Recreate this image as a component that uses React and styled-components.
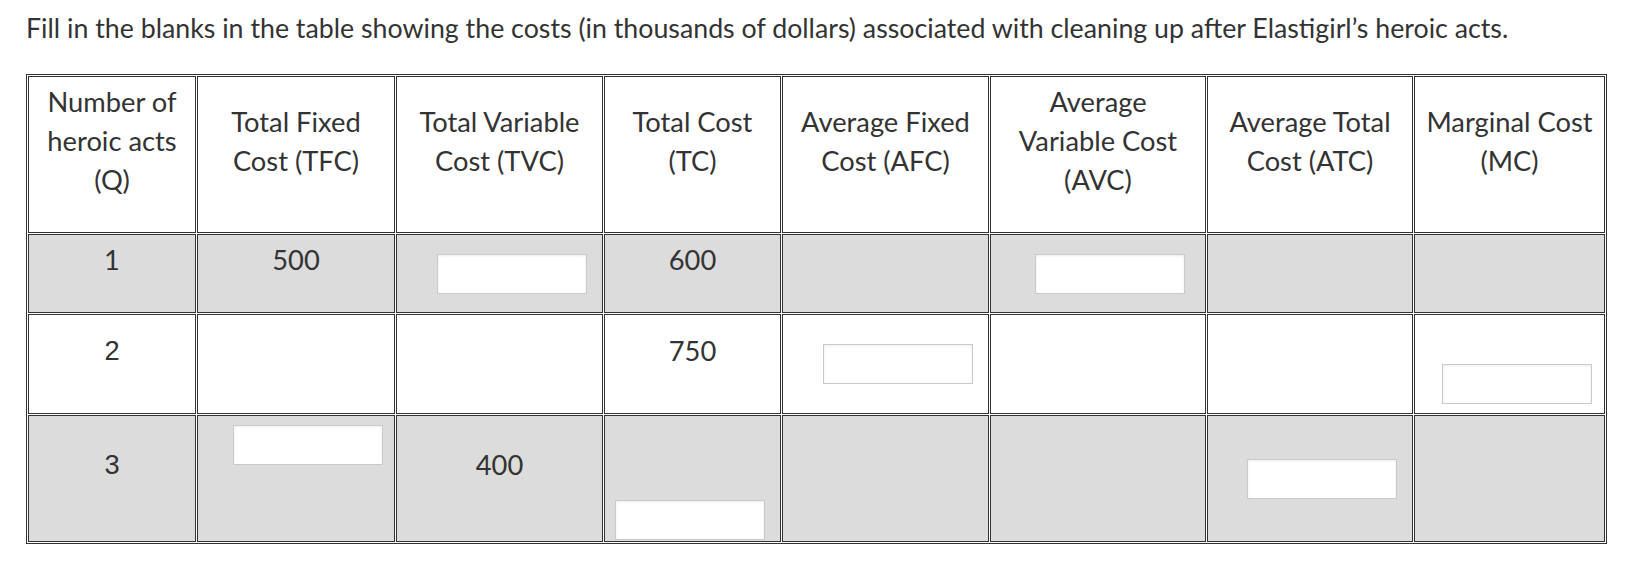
import React from "react";
import styled, { createGlobalStyle } from "styled-components";

const GlobalStyle = createGlobalStyle`
  html, body {
    margin: 0;
    padding: 0;
    background: #fff;
  }
  body {
    font-family: Lato, "Noto Sans", sans-serif;
    color: #333;
  }
`;

const Page = styled.div`
  padding-left: 26px;
`;

const Prompt = styled.p`
  margin: 0;
  padding-top: 7px;
  font-size: 26.75px;
  line-height: 42px;
  color: #333;
`;

const CostTable = styled.table`
  margin-top: 25px;
  width: 1581px;
  table-layout: fixed;
  border: 1px solid #333;
  border-spacing: 1px;
  font-size: 27.3px;
  color: #333;
`;

const Col = styled.col`
  width: ${(p) => p.$w}px;
`;

const Row = styled.tr`
  height: ${(p) => p.$h}px;
`;

const Cell = styled.td`
  border: 1px solid #333;
  padding: 5px ${(p) => 5 + (p.$shift < 0 ? -2 * p.$shift : 0)}px 5px
    ${(p) => 5 + (p.$shift > 0 ? 2 * p.$shift : 0)}px;
  padding-top: ${(p) => (p.$align === "top" ? 5 + (p.$gap || 0) : 5)}px;
  padding-bottom: ${(p) => (p.$align === "bottom" ? 5 + (p.$gap || 0) : 5)}px;
  text-align: center;
  vertical-align: ${(p) => p.$align || "middle"};
  background: ${(p) => (p.$shade ? "#dcdcdc" : "#fff")};
  font-weight: normal;
`;

const Label = styled.p`
  margin: 0 0 28px;
  line-height: 39px;
  font-family: ${(p) =>
    p.$plain ? '"Liberation Sans", Arial, sans-serif' : "inherit"};
`;

const Blank = styled.input`
  display: block;
  box-sizing: border-box;
  width: 150px;
  height: 40px;
  margin: 0 auto;
  padding: 0 8px;
  border: 1px solid #cacaca;
  background: #fff;
  box-shadow: inset 0 1px 3px rgba(0, 0, 0, 0.08);
  font: inherit;
  font-size: 16px;
  outline: none;
`;

const widths = [168, 198, 207, 177, 207, 216, 206, 191];

const headers = [
  ["Number of", "heroic acts", "(Q)"],
  ["Total Fixed", "Cost (TFC)"],
  ["Total Variable", "Cost (TVC)"],
  ["Total Cost", "(TC)"],
  ["Average Fixed", "Cost (AFC)"],
  ["Average", "Variable Cost", "(AVC)"],
  ["Average Total", "Cost (ATC)"],
  ["Marginal Cost", "(MC)"],
];

// each cell: text, or a blank with its placement
const rows = [
  {
    h: 79,
    shade: true,
    cells: [
      { text: "1" },
      { text: "500" },
      { blank: true, shift: 12 },
      { text: "600" },
      {},
      { blank: true, shift: 12 },
      {},
      {},
    ],
  },
  {
    h: 100,
    shade: false,
    cells: [
      { text: "2", plain: true },
      {},
      {},
      { text: "750" },
      { blank: true, shift: 12 },
      {},
      {},
      { blank: true, shift: 7, align: "bottom", gap: 4 },
    ],
  },
  {
    h: 127,
    shade: true,
    cells: [
      { text: "3", plain: true },
      { blank: true, shift: 12, align: "top", gap: 4 },
      { text: "400" },
      { blank: true, shift: -3, align: "bottom", gap: -4 },
      {},
      {},
      { blank: true, shift: 12 },
      {},
    ],
  },
];

export default function App() {
  return (
    <Page>
      <GlobalStyle />
      <Prompt>
        Fill in the blanks in the table showing the costs (in thousands of
        dollars) associated with cleaning up after Elastigirl’s heroic acts.
      </Prompt>
      <CostTable>
        <colgroup>
          {widths.map((w, i) => (
            <Col key={i} $w={w} />
          ))}
        </colgroup>
        <thead>
          <Row $h={157}>
            {headers.map((lines, i) => (
              <Cell as="th" key={i}>
                <Label>
                  {lines.map((l, j) => (
                    <React.Fragment key={j}>
                      {j > 0 && <br />}
                      {l}
                    </React.Fragment>
                  ))}
                </Label>
              </Cell>
            ))}
          </Row>
        </thead>
        <tbody>
          {rows.map((r, ri) => (
            <Row key={ri} $h={r.h}>
              {r.cells.map((c, ci) => (
                <Cell
                  key={ci}
                  $shade={r.shade}
                  $align={c.align}
                  $gap={c.gap}
                  $shift={c.shift || 0}
                >
                  {c.text && <Label $plain={c.plain}>{c.text}</Label>}
                  {c.blank && <Blank type="text" aria-label="answer" />}
                </Cell>
              ))}
            </Row>
          ))}
        </tbody>
      </CostTable>
    </Page>
  );
}
